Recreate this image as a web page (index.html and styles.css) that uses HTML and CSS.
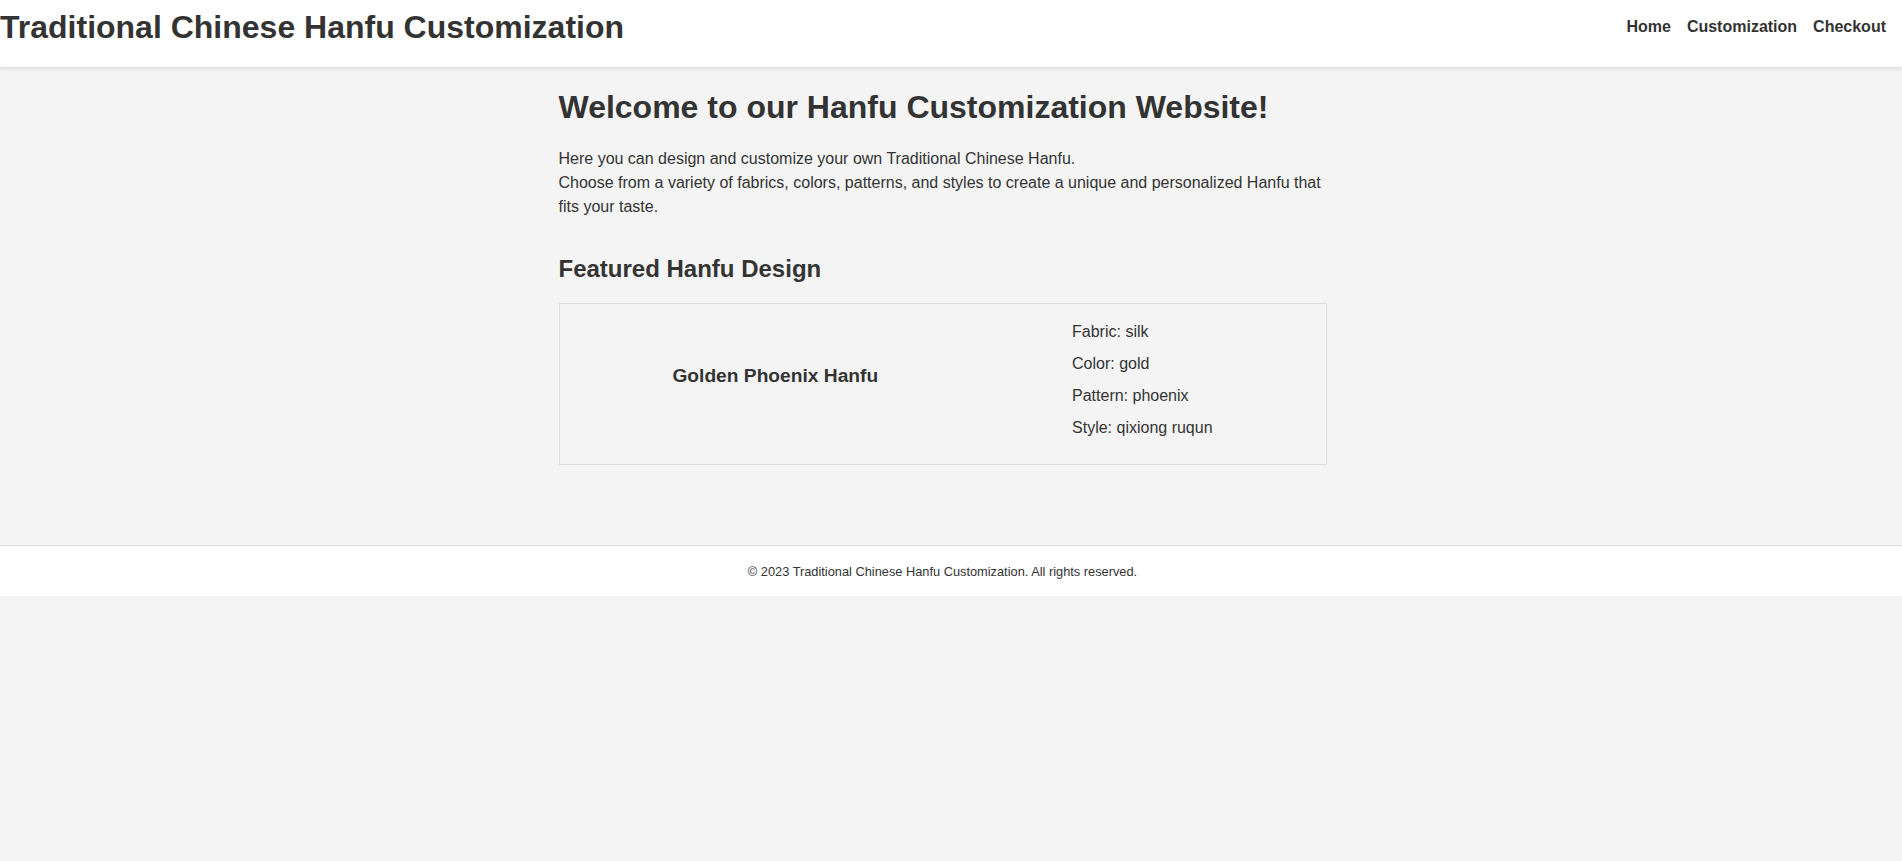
FILE: index.html
```html
<!DOCTYPE html>
<html lang="en">
<head>
<meta charset="utf-8">
<title>Traditional Chinese Hanfu Customization</title>
<link rel="stylesheet" href="styles.css">
</head>
<body>
<header class="site-header">
  <h1 class="site-title">Traditional Chinese Hanfu Customization</h1>
  <nav class="site-nav">
    <a href="#" class="nav-link">Home</a>
    <a href="#" class="nav-link">Customization</a>
    <a href="#" class="nav-link">Checkout</a>
  </nav>
</header>
<main class="main">
  <div class="container">
    <h2 class="welcome">Welcome to our Hanfu Customization Website!</h2>
    <p class="intro">Here you can design and customize your own Traditional Chinese Hanfu.<br>Choose from a variety of fabrics, colors, patterns, and styles to create a unique and personalized Hanfu that fits your taste.</p>
    <h3 class="featured-title">Featured Hanfu Design</h3>
    <div class="design-card">
      <h4 class="design-name">Golden Phoenix Hanfu</h4>
      <div class="design-details">
        <p class="detail">Fabric: silk</p>
        <p class="detail">Color: gold</p>
        <p class="detail">Pattern: phoenix</p>
        <p class="detail">Style: qixiong ruqun</p>
      </div>
    </div>
  </div>
</main>
<footer class="site-footer">
  <p class="copyright">&copy; 2023 Traditional Chinese Hanfu Customization. All rights reserved.</p>
</footer>
</body>
</html>
```
FILE: styles.css
```css
* {
  box-sizing: border-box;
}

html, body {
  margin: 0;
  padding: 0;
}

body {
  background: #f4f4f4;
  color: #333;
  font-family: "Liberation Sans", Arial, sans-serif;
  font-size: 16px;
}

.site-header {
  background: #fff;
  display: flex;
  justify-content: space-between;
  align-items: center;
  padding: 9px 16px 21px 0;
  box-shadow: 0 2px 4px rgba(0, 0, 0, 0.1);
  position: relative;
}

.site-title {
  margin: 0;
  font-size: 32px;
  line-height: 37px;
  font-weight: bold;
  color: #333;
}

.site-nav {
  display: flex;
  gap: 16px;
  padding-bottom: 2px;
}

.nav-link {
  color: #333;
  text-decoration: none;
  font-weight: bold;
  font-size: 16px;
  line-height: 18px;
}

.main {
  padding: 22px 17px 0 0;
}

.container {
  width: 768px;
  margin: 0 auto;
}

.welcome {
  margin: 0 0 21px;
  font-size: 32px;
  line-height: 37px;
  color: #333;
}

.intro {
  margin: 0;
  line-height: 24px;
}

.featured-title {
  margin: 36px 0 20px;
  font-size: 24px;
  line-height: 28px;
  color: #333;
}

.design-card {
  border: 1px solid #ddd;
  padding: 16px;
  display: flex;
  justify-content: space-around;
  align-items: center;
  margin-bottom: 80px;
}

.design-name {
  margin: 0 0 17px;
  font-size: 19.2px;
  line-height: 22px;
  font-weight: bold;
}

.design-details {
  display: flex;
  flex-direction: column;
}

.detail {
  margin: 0 0 8px;
  line-height: 24px;
}

.site-footer {
  background: #fff;
  border-top: 1px solid #ddd;
  padding: 18px 17px 17px 0;
  text-align: center;
}

.copyright {
  margin: 0;
  font-size: 12.8px;
  line-height: 15px;
}
```
